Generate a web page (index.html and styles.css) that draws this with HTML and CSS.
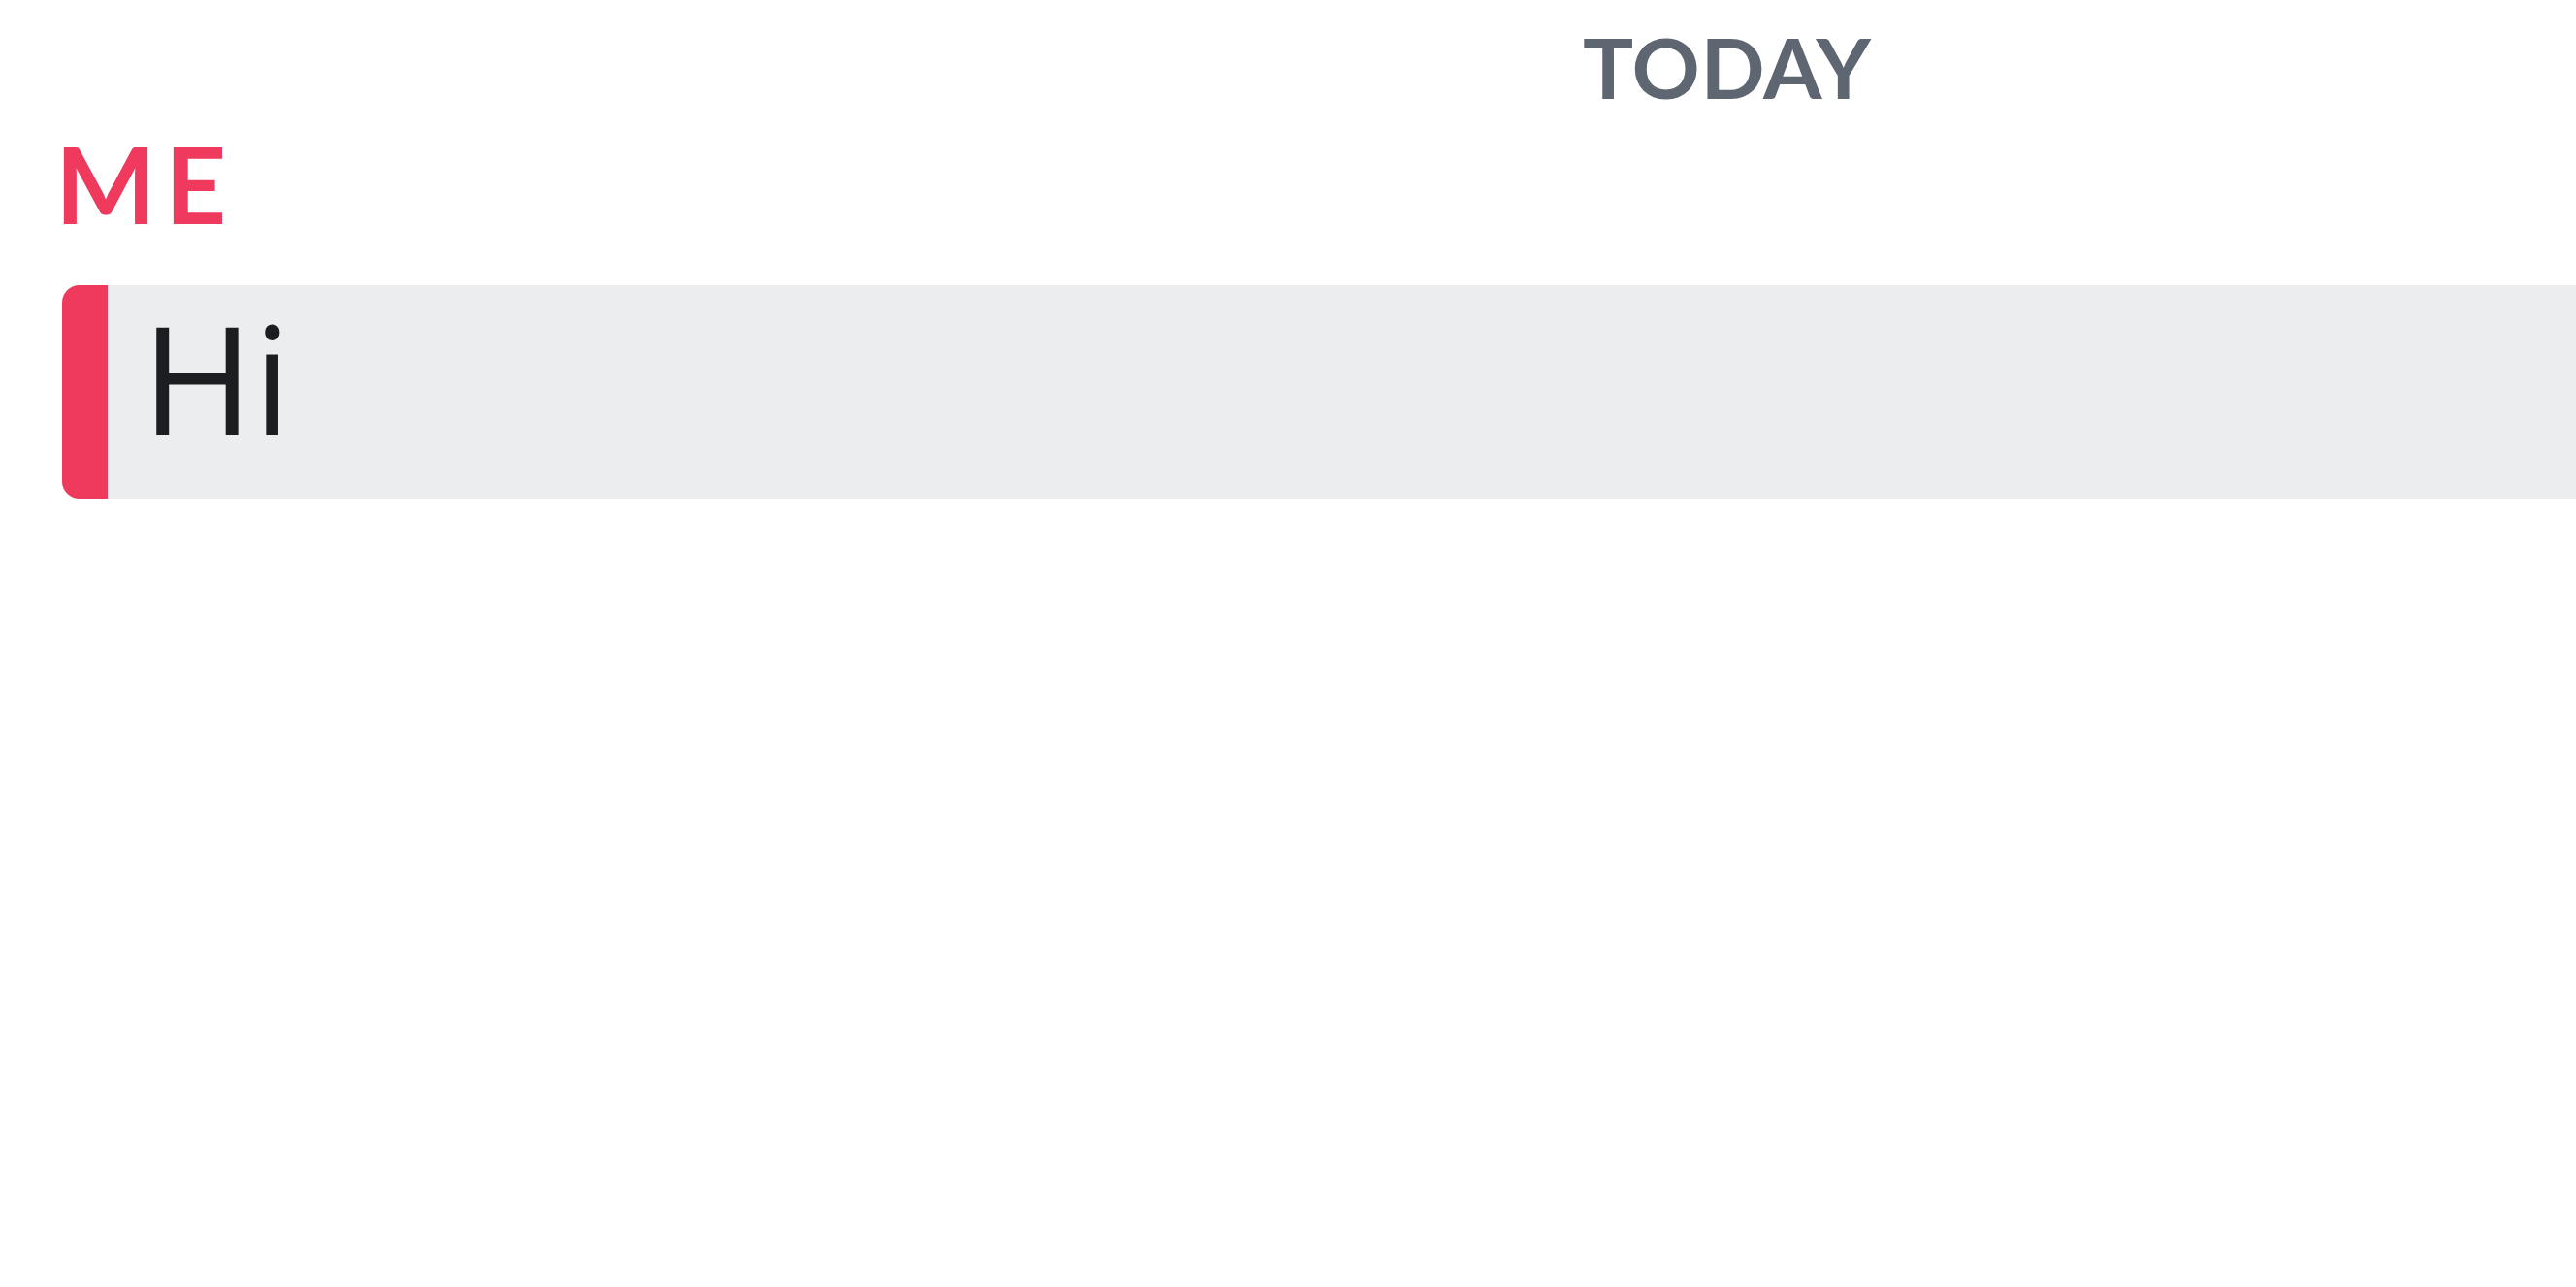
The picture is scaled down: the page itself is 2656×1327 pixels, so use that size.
FILE: index.html
```html
<!DOCTYPE html>
<html lang="en">
<head>
<meta charset="utf-8">
<title>Chat</title>
<link rel="stylesheet" href="styles.css">
</head>
<body>
  <main class="thread">
    <header class="day-header">TODAY</header>
    <section class="group">
      <div class="sender">ME</div>
      <div class="bubble">
        <div class="bubble-bar"></div>
        <div class="bubble-text">Hi</div>
      </div>
    </section>
  </main>
</body>
</html>
```
FILE: styles.css
```css
html, body {
  margin: 0;
  padding: 0;
  background: #ffffff;
}

body {
  font-family: "Open Sans", "Liberation Sans", sans-serif;
}

.thread {
  display: flex;
  flex-direction: column;
}

.day-header {
  padding-top: 25px;
  padding-left: 1632px;
  font-family: Lato, "Open Sans", sans-serif;
  font-size: 87px;
  line-height: 1;
  font-weight: 700;
  color: #5e6672;
  letter-spacing: 0.5px;
}

.group {
  display: flex;
  flex-direction: column;
  padding-left: 64px;
}

.sender {
  margin-top: 21px;
  margin-left: -7px;
  font-family: Lato, "Open Sans", sans-serif;
  font-size: 110px;
  line-height: 1;
  font-weight: 700;
  color: #ef3a5d;
  letter-spacing: 9px;
}

.bubble {
  margin-top: 51px;
  display: flex;
  height: 220px;
  background: #ecedef;
  border-radius: 18px 0 0 18px;
}

.bubble-bar {
  width: 47px;
  flex: none;
  background: #ef3a5d;
  border-radius: 18px 0 0 18px;
}

.bubble-text {
  padding-top: 17px;
  padding-left: 35px;
  font-size: 156px;
  line-height: 1;
  font-weight: 400;
  color: #1c1d20;
}
```
